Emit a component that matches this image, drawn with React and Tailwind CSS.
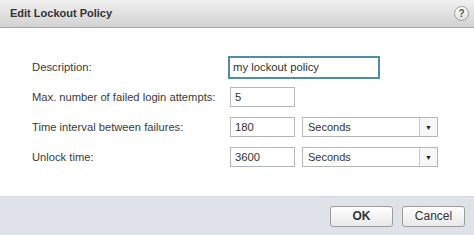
const ROWS = [
  { label: 'Max. number of failed login attempts:', value: '5' },
  { label: 'Time interval between failures:', value: '180', unit: 'Seconds' },
  { label: 'Unlock time:', value: '3600', unit: 'Seconds' },
]

function UnitSelect({ value }) {
  return (
    <div className="ml-[7px] flex h-[20px] w-[136px] border border-[#b5b5b5] bg-white">
      <div className="flex flex-1 items-center pl-[5px] text-[11px] text-[#333]">{value}</div>
      <div className="flex w-[18px] items-center justify-center border-l border-[#c8c8c8] bg-[#f7f7f7]">
        <span className="text-[7px] leading-none text-[#222]">▼</span>
      </div>
    </div>
  )
}

export default function App() {
  return (
    <div className="flex h-[235px] w-[474px] flex-col bg-white font-['Liberation_Sans',Arial,sans-serif]">
      {/* Title bar */}
      <div className="flex h-[28px] shrink-0 items-center justify-between border-b border-[#a3a3a3] bg-gradient-to-b from-[#f0f0f0] to-[#d2d2d2] pl-[10px] pr-[5px]">
        <span className="text-[11px] font-bold text-[#333]">Edit Lockout Policy</span>
        <div className="flex h-[15px] w-[15px] items-center justify-center rounded-full border border-[#9a9a9a] bg-gradient-to-b from-white to-[#e2e2e2] text-[10px] font-bold leading-none text-[#555]">
          ?
        </div>
      </div>

      {/* Form */}
      <div className="flex-1 pt-[24px] pl-[32px]">
        <div className="flex h-[30px] items-center">
          <span className="w-[196px] text-[11.3px] text-[#3a3a3a]">Description:</span>
          <div className="flex h-[23px] w-[152px] items-center border-2 border-[#4f8fa6] bg-white pl-[3px] text-[11.3px] text-[#333]">
            my lockout policy
          </div>
        </div>
        {ROWS.map((r) => (
          <div key={r.label} className="flex h-[30px] items-center">
            <span className="w-[198px] text-[11.2px] text-[#3a3a3a]">{r.label}</span>
            <div className="flex h-[20px] w-[65px] items-center border border-[#b5b5b5] bg-white pl-[4px] text-[11.3px] text-[#333]">
              {r.value}
            </div>
            {r.unit && <UnitSelect value={r.unit} />}
          </div>
        ))}
      </div>

      {/* Footer */}
      <div className="flex h-[39px] shrink-0 items-center justify-end gap-[9px] border-t border-[#d2d6dd] bg-[#dfe2e8] pr-[9px]">
        <button className="h-[21px] w-[63px] rounded-[3px] border border-[#9c9c9c] bg-gradient-to-b from-white to-[#e9e9e9] text-[12px] font-bold text-[#333]">
          OK
        </button>
        <button className="h-[21px] w-[63px] rounded-[3px] border border-[#9c9c9c] bg-gradient-to-b from-white to-[#e9e9e9] text-[12px] text-[#333]">
          Cancel
        </button>
      </div>
    </div>
  )
}
